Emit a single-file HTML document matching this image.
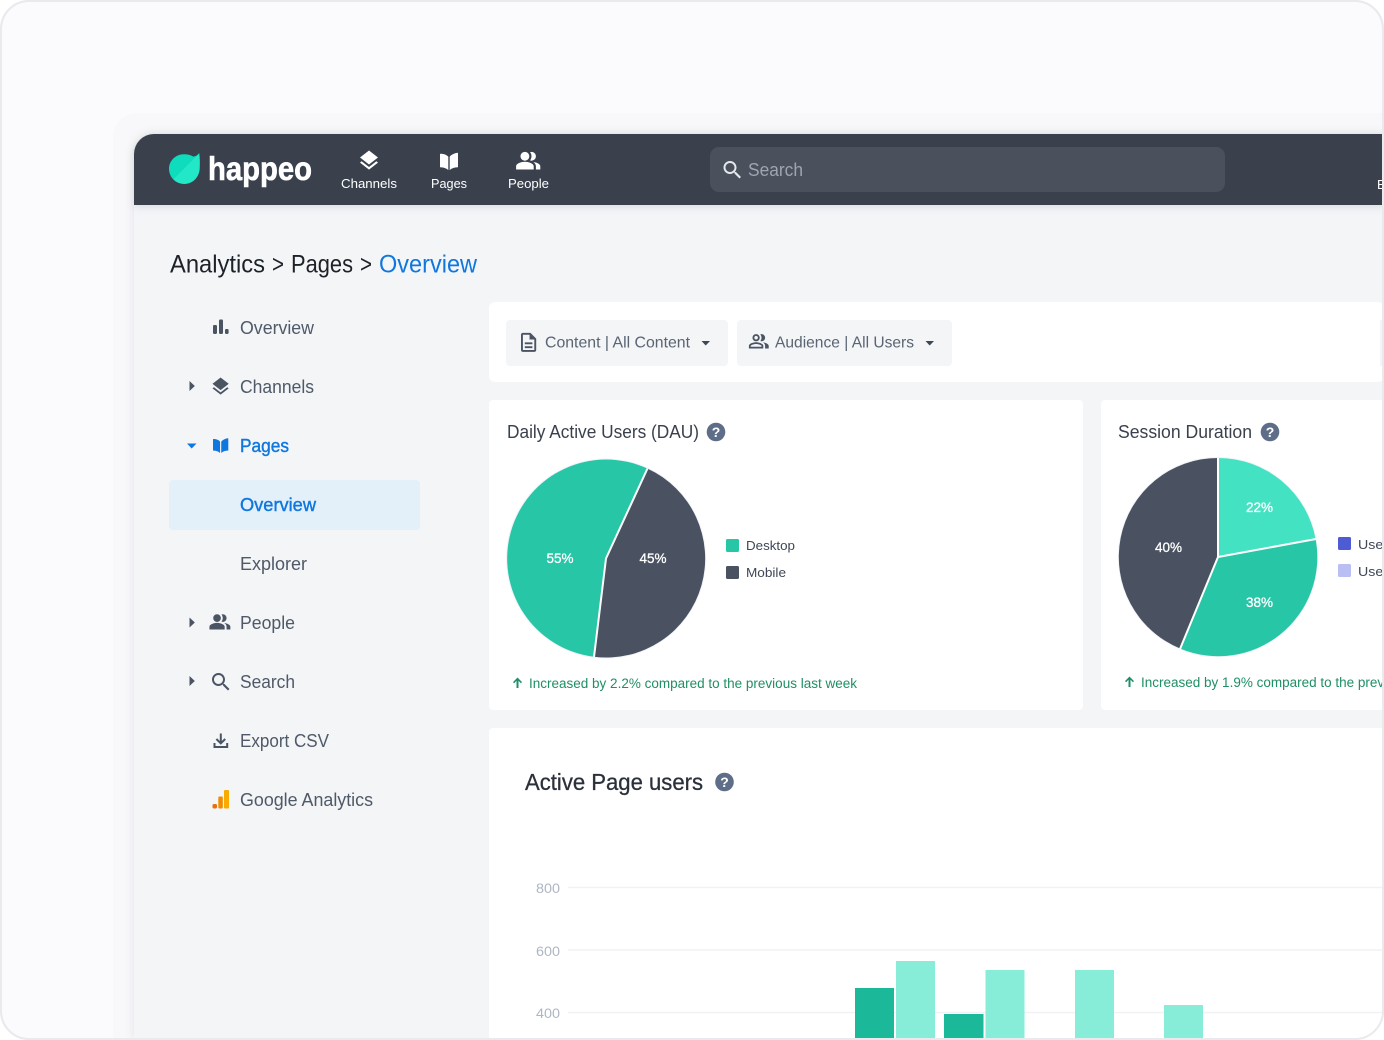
<!DOCTYPE html>
<html lang="en">
<head>
<meta charset="utf-8">
<title>Happeo Analytics</title>
<style>
html,body{margin:0;padding:0;width:1384px;height:1040px;overflow:hidden;background:#fff}
svg{display:block}
text{font-family:"Liberation Sans",sans-serif}
.s{font-size:18px;fill:#4f5968}
.sa{font-size:18px;fill:#0f77df;stroke:#0f77df;stroke-width:.4}
.l{font-size:13px;fill:#3f4757}
.g{font-size:13.5px;fill:#1f8f64}
.p{font-size:13.5px;fill:#fff;stroke:#fff;stroke-width:.3;text-anchor:middle}
.a{font-size:13.5px;fill:#aeb6c4}
.q{font-size:14px;fill:#fff;font-weight:bold;text-anchor:middle}
.t{font-size:18px;fill:#3a414d}
.b{font-size:16px;fill:#5a6473}
.n{font-size:13px;fill:#fff}
</style>
</head>
<body>
<svg width="1384" height="1040" viewBox="0 0 1384 1040" xmlns="http://www.w3.org/2000/svg">
<defs>
<clipPath id="app"><rect x="100" y="100" width="1282" height="938"/></clipPath>
<linearGradient id="lg" x1="0" y1="0" x2="1" y2="1">
<stop offset="0" stop-color="#0edcbc"/><stop offset="0.5" stop-color="#0edcbc"/><stop offset="0.5" stop-color="#22e8c8"/><stop offset="1" stop-color="#22e8c8"/>
</linearGradient>
<path id="layers" d="M11.99 18.54l-7.37-5.73L3 14.07l9 7 9-7-1.63-1.27-7.38 5.74zM12 16l7.36-5.73L21 9l-9-7-9 7 1.63 1.27L12 16z"/>
<path id="people" d="M16.67 13.13C18.04 14.06 19 15.32 19 17v3h4v-3c0-2.18-3.57-3.47-6.33-3.87zM15 12c2.21 0 4-1.79 4-4s-1.79-4-4-4c-.47 0-.91.1-1.33.24C14.5 5.27 15 6.58 15 8s-.5 2.73-1.33 3.76c.42.14.86.24 1.33.24zM9 12c2.21 0 4-1.79 4-4s-1.79-4-4-4-4 1.79-4 4 1.79 4 4 4zm0 1c-2.67 0-8 1.34-8 4v3h16v-3c0-2.66-5.33-4-8-4z"/>
<path id="book" d="M0.6 1.2C3.6 1.2 6.6 2.2 8.3 4.2V17.6C6.6 15.9 3.6 14.9 0.6 14.9C0.3 14.9 0 14.6 0 14.3V1.8C0 1.5 0.3 1.2 0.6 1.2ZM17.4 0.3C14.6 0.7 11.4 2.2 9.7 4.2V17.6C11.4 15.9 14.4 14.9 17.4 14.9C17.7 14.9 18 14.6 18 14.3V0.9C18 0.6 17.7 0.3 17.4 0.3Z"/>
<path id="search" d="M15.5 14h-.79l-.28-.27C15.41 12.59 16 11.11 16 9.5 16 5.91 13.09 3 9.5 3S3 5.91 3 9.5 5.91 16 9.5 16c1.61 0 3.09-.59 4.23-1.57l.27.28v.79l5 4.99L20.49 19l-4.99-5zm-6 0C7.01 14 5 11.99 5 9.5S7.01 5 9.5 5 14 7.01 14 9.5 11.99 14 9.5 14z"/>
<path id="up" d="M4.5 0L9 4.6L7.900 5.700L5.500 3.300V10.500H3.500V3.300L1.100 5.700L0 4.600Z"/>
</defs>

<!-- outer frame -->
<rect x="1" y="1" width="1382" height="1038" rx="28" fill="#fbfbfd" stroke="#e9eaed" stroke-width="2"/>

<g clip-path="url(#app)">
<path d="M113 1040V137a24 24 0 0 1 24-24H1384V1040Z" fill="#f8f8fa"/>
<path d="M134 1040V154a20 20 0 0 1 20-20H1384V1040Z" fill="#f3f5f7" style="filter:drop-shadow(0 0 5px rgba(40,50,70,.10))"/>
<path d="M134 205V154a20 20 0 0 1 20-20H1384V205Z" fill="#3a414d" style="filter:drop-shadow(0 2px 4px rgba(40,50,70,.12))"/>

<!-- logo -->
<path d="M199.200 153C199.900 158 200 163 199.700 168.500C199.300 177 192.800 184 184.300 184C175.700 184 169 177.100 169 168.800C169 160.900 175.600 154.300 184 154.300C187.500 154.300 190.500 155 193.200 156.500C195.500 156.500 197.600 155.200 199.200 153Z" fill="url(#lg)"/>
<text x="208" y="180" font-size="33" font-weight="bold" fill="#fff" stroke="#fff" stroke-width=".6" textLength="104" lengthAdjust="spacingAndGlyphs">happeo</text>

<!-- top nav -->
<use href="#layers" transform="translate(357 148.500)" fill="#fff"/>
<text class="n" x="341" y="188" textLength="56" lengthAdjust="spacingAndGlyphs">Channels</text>
<use href="#book" transform="translate(440 152.500)" fill="#fff"/>
<text class="n" x="431" y="188" textLength="36" lengthAdjust="spacingAndGlyphs">Pages</text>
<use href="#people" transform="translate(515 147.500) scale(1.1)" fill="#fff"/>
<text class="n" x="508" y="188" textLength="41" lengthAdjust="spacingAndGlyphs">People</text>

<!-- search -->
<rect x="710" y="147" width="515" height="45" rx="9" fill="#4a515d"/>
<use href="#search" transform="translate(720.500 158)" fill="#e6e8ec"/>
<text x="748" y="176" font-size="18" fill="#9ea5b0" textLength="55" lengthAdjust="spacingAndGlyphs">Search</text>
<text x="1377" y="189" font-size="13" fill="#fff">E</text>

<!-- breadcrumb -->
<text x="170" y="272.500" font-size="25" fill="#1d2128" textLength="95" lengthAdjust="spacingAndGlyphs">Analytics</text>
<text x="272" y="272.500" font-size="25" fill="#1d2128" textLength="12" lengthAdjust="spacingAndGlyphs">&gt;</text>
<text x="291" y="272.500" font-size="25" fill="#1d2128" textLength="62" lengthAdjust="spacingAndGlyphs">Pages</text>
<text x="360" y="272.500" font-size="25" fill="#1d2128" textLength="12" lengthAdjust="spacingAndGlyphs">&gt;</text>
<text x="379" y="272.500" font-size="25" fill="#0f77df" textLength="98" lengthAdjust="spacingAndGlyphs">Overview</text>

<!-- sidebar -->
<g fill="#4a5463">
<rect x="213" y="325" width="4" height="9" rx="1.200"/><rect x="219" y="319.500" width="4" height="14.500" rx="1.200"/><rect x="225" y="329" width="3.600" height="5" rx="1.200"/>
<path d="M189.500 381L194.800 386L189.500 391Z"/>
<path d="M189.500 617.500L194.800 622.500L189.500 627.500Z"/>
<path d="M189.500 676L194.800 681L189.500 686Z"/>
<use href="#layers" transform="translate(209.800 375.700) scale(.9)"/>
<use href="#people" transform="translate(208.500 610.500) scale(.95)"/>
<use href="#search" transform="translate(209 670)"/>
<path d="M219.800 733.500H221.800V741L224.500 738.300L225.900 739.700L220.800 744.800L215.700 739.700L217.100 738.300L219.800 741ZM213.500 743H215.500V746H226.200V743H228.200V748H213.500Z"/>
</g>
<text class="s" x="240" y="334" textLength="74" lengthAdjust="spacingAndGlyphs">Overview</text>
<text class="s" x="240" y="393" textLength="74" lengthAdjust="spacingAndGlyphs">Channels</text>
<path d="M187 443.500H196.500L191.700 448.500Z" fill="#0f77df"/>
<use href="#book" transform="translate(213 438) scale(.85)" fill="#0f77df"/>
<text class="sa" x="240" y="452" textLength="49" lengthAdjust="spacingAndGlyphs">Pages</text>
<rect x="169" y="480" width="251" height="50" rx="4" fill="#e3f0fa"/>
<text class="sa" x="240" y="511" textLength="76" lengthAdjust="spacingAndGlyphs">Overview</text>
<text class="s" x="240" y="570" textLength="67" lengthAdjust="spacingAndGlyphs">Explorer</text>
<text class="s" x="240" y="629" textLength="55" lengthAdjust="spacingAndGlyphs">People</text>
<text class="s" x="240" y="688" textLength="55" lengthAdjust="spacingAndGlyphs">Search</text>
<text class="s" x="240" y="747" textLength="89" lengthAdjust="spacingAndGlyphs">Export CSV</text>
<text class="s" x="240" y="806" textLength="133" lengthAdjust="spacingAndGlyphs">Google Analytics</text>
<rect x="212.500" y="804" width="4.500" height="4.500" rx="1.500" fill="#e8710a"/>
<rect x="218.300" y="796.500" width="4.500" height="12" rx="1" fill="#f08c00"/>
<rect x="224" y="790" width="5" height="18.500" rx="1" fill="#f9ab00"/>

<!-- filter card -->
<rect x="489" y="302" width="895" height="80" rx="6" fill="#fff"/>
<rect x="506" y="320" width="222" height="46" rx="4" fill="#f3f5f7"/>
<rect x="737" y="320" width="215" height="46" rx="4" fill="#f3f5f7"/>
<rect x="1380" y="320" width="4" height="46" fill="#f3f5f7"/>
<path transform="translate(517.200 331) scale(.95)" fill="#4a5463" d="M8 16h8v2H8zm0-4h8v2H8zm6-10H6c-1.100 0-2 .9-2 2v16c0 1.100.89 2 1.990 2H18c1.100 0 2-.9 2-2V8l-6-6zm4 18H6V4h7v5h5v11z"/>
<text class="b" x="545" y="347.500" textLength="145" lengthAdjust="spacingAndGlyphs">Content | All Content</text>
<path d="M701.500 341H710L705.700 345.500Z" fill="#3f4757"/>
<path transform="translate(748 330.500) scale(.9)" fill="#4a5463" d="M16.670 13.130C18.040 14.060 19 15.320 19 17v3h4v-3c0-2.180-3.570-3.470-6.330-3.870zM15 12c2.210 0 4-1.790 4-4s-1.790-4-4-4c-.47 0-.91.1-1.330.24C14.500 5.270 15 6.580 15 8s-.5 2.730-1.330 3.760c.42.14.86.24 1.330.24zM9 12c2.210 0 4-1.790 4-4s-1.790-4-4-4-4 1.790-4 4 1.790 4 4 4zm0-6c1.100 0 2 .9 2 2s-.9 2-2 2-2-.9-2-2 .9-2 2-2zM9 13c-2.670 0-8 1.340-8 4v3h16v-3c0-2.660-5.330-4-8-4zm6 5H3v-.99C3.200 16.290 6.300 15 9 15s5.800 1.290 6 2z"/>
<text class="b" x="775" y="347.500" textLength="139" lengthAdjust="spacingAndGlyphs">Audience | All Users</text>
<path d="M925.500 341H934L929.700 345.500Z" fill="#3f4757"/>

<!-- DAU card -->
<rect x="489" y="400" width="594" height="310" rx="4" fill="#fff"/>
<text class="t" x="507" y="438" textLength="192" lengthAdjust="spacingAndGlyphs">Daily Active Users (DAU)</text>
<circle cx="716" cy="432" r="9.300" fill="#5e6e88"/>
<text class="q" x="716" y="437">?</text>
<circle cx="606" cy="558.500" r="100" fill="#f1f3f8"/>
<path d="M606 558.500L647.300 468.500A99 99 0 1 0 594 656.800Z" fill="#27c6a6"/>
<path d="M606 558.500L647.300 468.500A99 99 0 0 1 594 656.800Z" fill="#4a5262"/>
<path d="M647.500 468.500L606 558.500L594 657" fill="none" stroke="#fff" stroke-width="2"/>
<text class="p" x="560" y="563">55%</text>
<text class="p" x="653" y="563">45%</text>
<rect x="726" y="539" width="13" height="13" rx="1.500" fill="#27c6a6"/>
<rect x="726" y="566" width="13" height="13" rx="1.500" fill="#4a5262"/>
<text class="l" x="746" y="550" textLength="49" lengthAdjust="spacingAndGlyphs">Desktop</text>
<text class="l" x="746" y="577" textLength="40" lengthAdjust="spacingAndGlyphs">Mobile</text>
<use href="#up" transform="translate(513 677.500)" fill="#1f8f64"/>
<text class="g" x="529" y="688" textLength="328" lengthAdjust="spacingAndGlyphs">Increased by 2.2% compared to the previous last week</text>

<!-- Session card -->
<rect x="1101" y="400" width="283" height="310" rx="4" fill="#fff"/>
<text class="t" x="1118" y="438" textLength="134" lengthAdjust="spacingAndGlyphs">Session Duration</text>
<circle cx="1270" cy="432" r="9.300" fill="#5e6e88"/>
<text class="q" x="1270" y="437">?</text>
<circle cx="1218" cy="557" r="100" fill="#f1f3f8"/>
<path d="M1218 557V458A99 99 0 0 1 1315.700 539.500Z" fill="#42e2c2"/>
<path d="M1218 557L1315.700 539.500A99 99 0 0 1 1180 648.500Z" fill="#27c6a6"/>
<path d="M1218 557L1180 648.500A99 99 0 0 1 1218 458Z" fill="#4a5262"/>
<path d="M1218 458V557L1316 539M1218 557L1180 649" fill="none" stroke="#fff" stroke-width="2"/>
<text class="p" x="1259.500" y="512">22%</text>
<text class="p" x="1259.500" y="607">38%</text>
<text class="p" x="1168.500" y="552">40%</text>
<rect x="1338" y="537" width="13" height="13" rx="1.500" fill="#4f5bd5"/>
<rect x="1338" y="564" width="13" height="13" rx="1.500" fill="#b9bff2"/>
<text class="l" x="1358" y="549" textLength="30" lengthAdjust="spacingAndGlyphs">User</text>
<text class="l" x="1358" y="576" textLength="30" lengthAdjust="spacingAndGlyphs">User</text>
<use href="#up" transform="translate(1125 676.500)" fill="#1f8f64"/>
<text class="g" x="1141" y="687" textLength="328" lengthAdjust="spacingAndGlyphs">Increased by 1.9% compared to the previous last week</text>

<!-- Active page users -->
<rect x="489" y="728" width="895" height="312" rx="4" fill="#fff"/>
<text x="525" y="790" font-size="23" fill="#2b313b" stroke="#2b313b" stroke-width=".3" textLength="178" lengthAdjust="spacingAndGlyphs">Active Page users</text>
<circle cx="724.500" cy="782" r="9.300" fill="#5e6e88"/>
<text class="q" x="724.500" y="787">?</text>
<g stroke="#f1f2f4" stroke-width="1.500">
<path d="M568 887.500H1382M568 950H1382M568 1012.500H1382"/>
</g>
<text class="a" x="536" y="893" textLength="24" lengthAdjust="spacingAndGlyphs">800</text>
<text class="a" x="536" y="956" textLength="24" lengthAdjust="spacingAndGlyphs">600</text>
<text class="a" x="536" y="1018" textLength="24" lengthAdjust="spacingAndGlyphs">400</text>
<g fill="#1bb99a">
<rect x="855" y="988" width="39" height="52"/>
<rect x="944" y="1014" width="39.500" height="26"/>
</g>
<g fill="#87edd8">
<rect x="896" y="961" width="39" height="79"/>
<rect x="985.500" y="970" width="39" height="70"/>
<rect x="1075" y="970" width="39" height="70"/>
<rect x="1164" y="1005" width="39" height="35"/>
</g>
</g>

<!-- frame redraw on top -->
<rect x="1" y="1" width="1382" height="1038" rx="28" fill="none" stroke="#e9eaed" stroke-width="2"/>
</svg>
</body>
</html>
